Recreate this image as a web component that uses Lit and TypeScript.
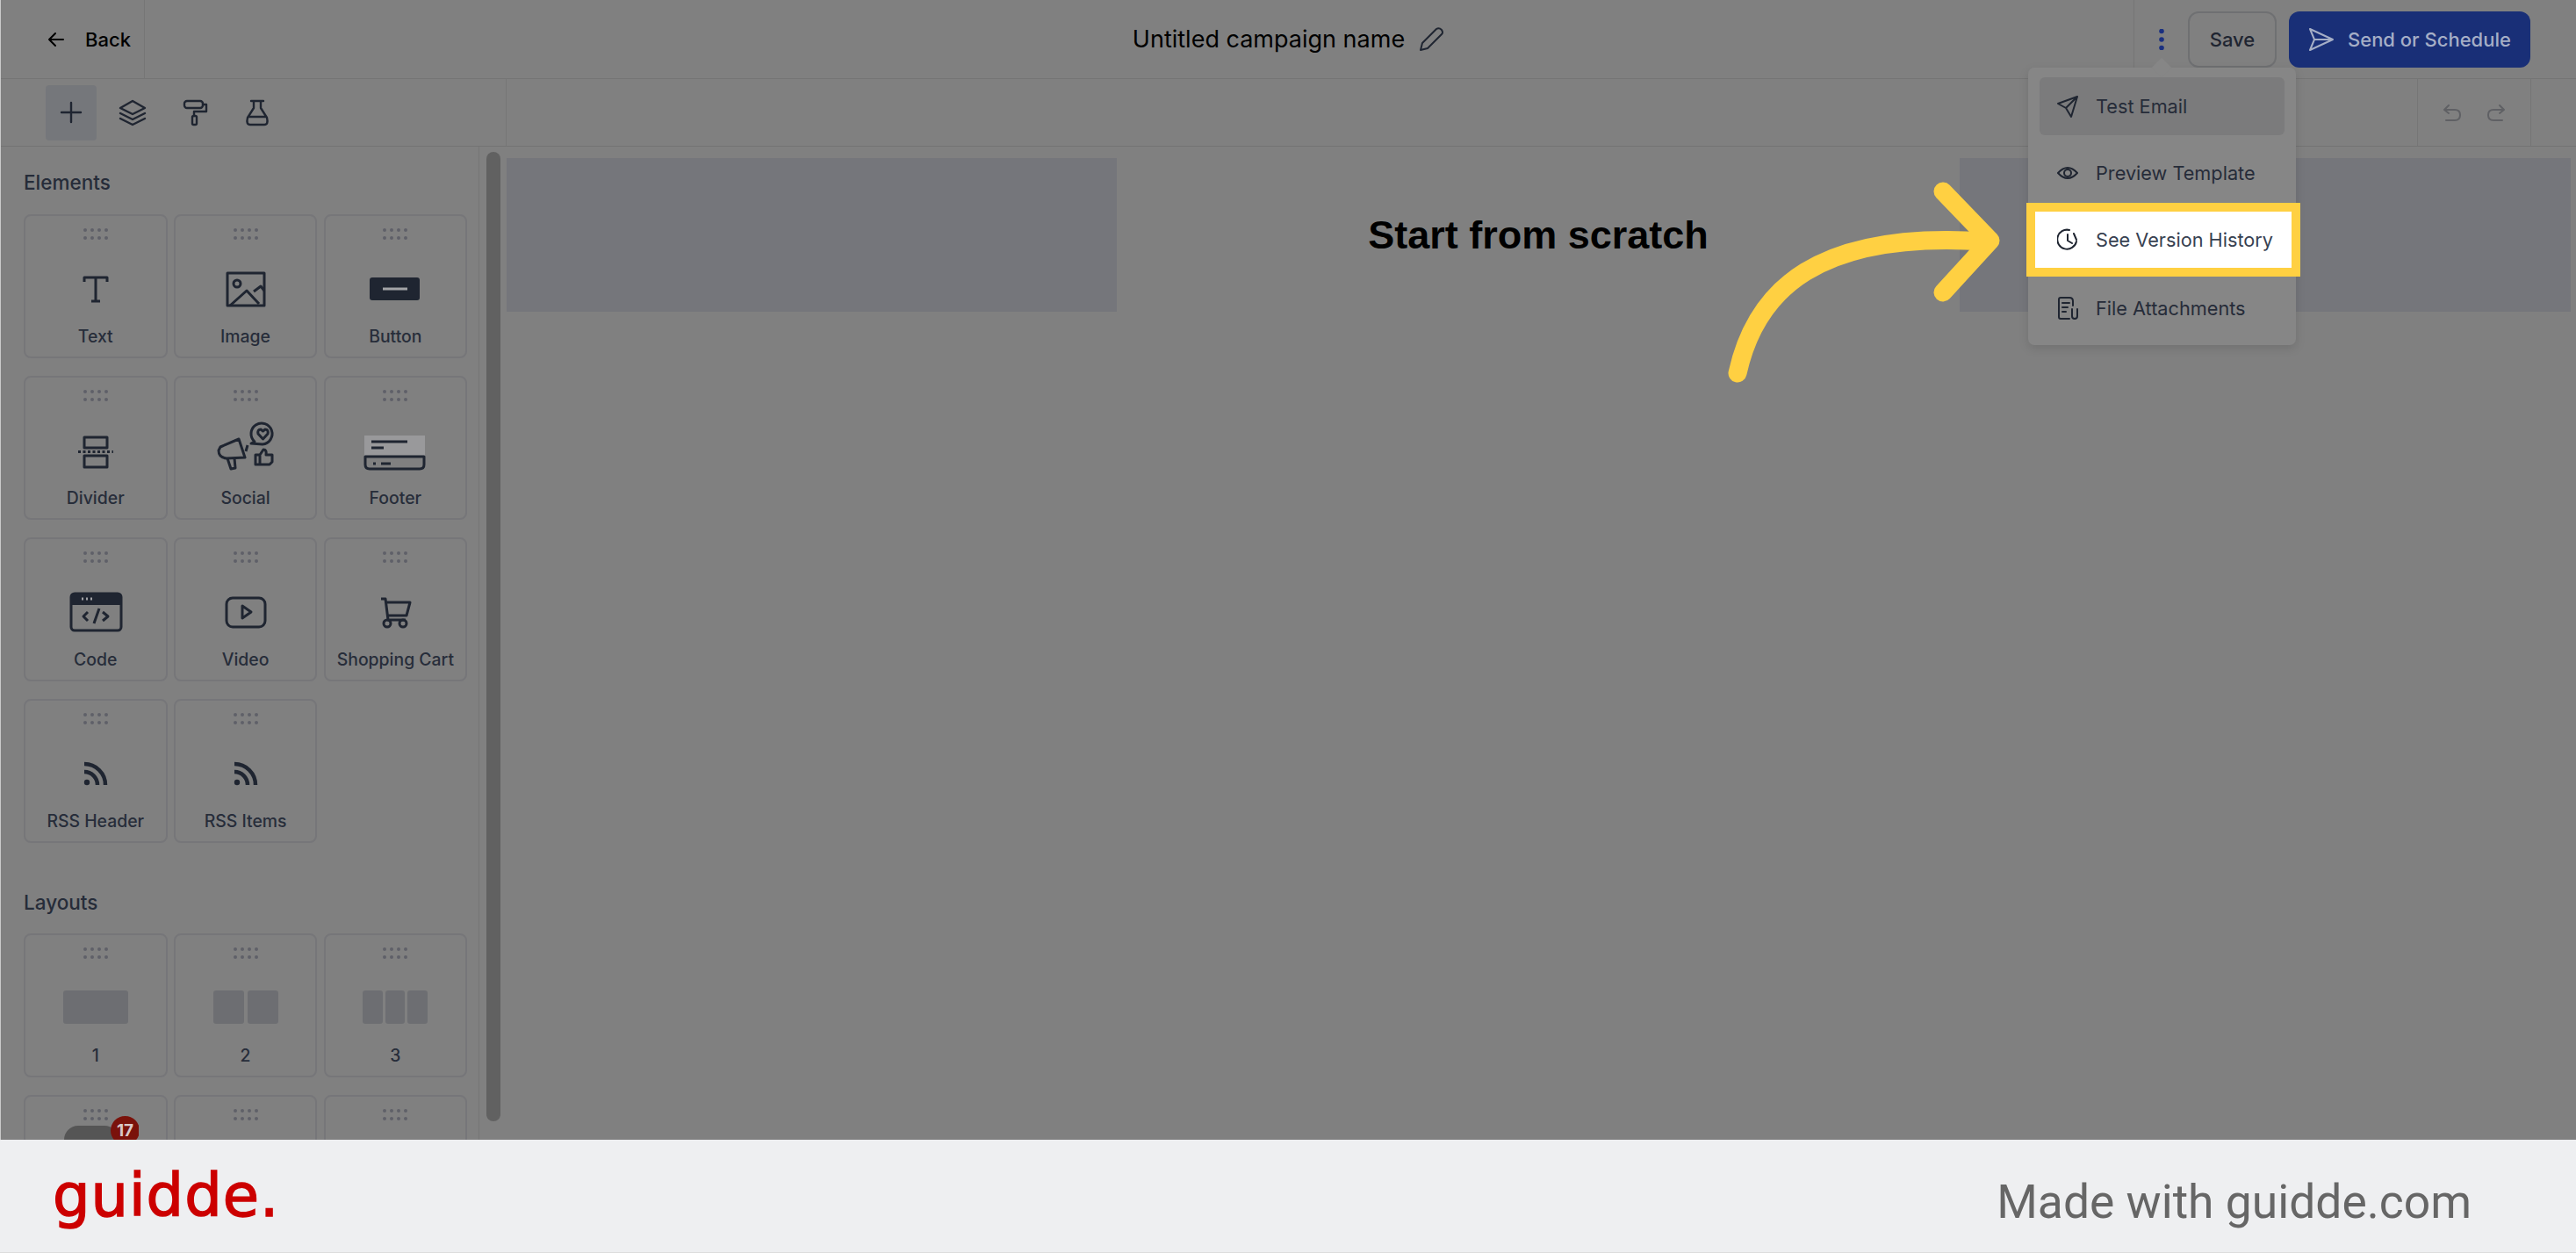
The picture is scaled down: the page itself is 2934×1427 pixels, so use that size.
import { LitElement, html, css, svg } from "lit";
import { customElement } from "lit/decorators.js";

const I = (body: unknown) => html`<svg class="ico" viewBox="-40 -32 80 64">${body}</svg>`;

const elements: [string, unknown][] = [
  ["Text", I(svg`<path d="M-13 -8V-13H13V-8M0 -13V14M-5 14H5"/>`)],
  ["Image", I(svg`<rect x="-21" y="-18" width="42" height="37"/><circle cx="-10" cy="-6" r="4"/><path d="M-18 19L1 2L15 17M9 3L17 -3L21 2"/>`)],
  ["Button", I(svg`<rect x="-29" y="-13" width="57" height="26" rx="3" class="f"/><path d="M-14 0H14" class="lite"/>`)],
  ["Divider", I(svg`<rect x="-13" y="-15" width="26" height="12"/><rect x="-13" y="6" width="26" height="13"/><path d="M-20 1.5H20" stroke-dasharray="3 2.5"/>`)],
  ["Social", I(svg`<path d="M-29 -4L-8 -13L-1 8L-22 9Q-31 8 -31 0Z"/><path d="M-21 9L-17 21L-12 20L-13 9M2 -6L0 1"/><path d="M6 -8L10 -10A12 12 0 1 1 19 -7Z"/><path d="M19.5 -13L14 -19Q13 -24 17 -24L19.5 -22L22 -24Q26 -24 25 -19Z"/><path d="M11 5H16V16H11ZM16 5L20 -1Q24 -1 23 5H30V13L27 16H16"/>`)],
  ["Footer", I(svg`<rect x="-35" y="-17" width="69" height="24" class="panel"/><path d="M-27 -10H14M-27 -3H-13"/><path d="M-34 7H33V16Q33 21 28 21H-29Q-34 21 -34 16Z"/><path d="M-25 15H-22M-16 15H-5"/>`)],
  ["Code", I(svg`<rect x="-28" y="-21" width="57" height="42" rx="4"/><path d="M-28 -15Q-28 -21 -24 -21H25Q29 -21 29 -15V-8H-28Z" class="f"/><path d="M-16 -15H-14M-11 -15H-9M-6 -15H-4" class="lite"/><path d="M-9 0L-14 5L-9 10M8 0L14 5L8 10M4 -4L-2 13"/>`)],
  ["Video", I(svg`<rect x="-22" y="-16" width="44" height="33" rx="7"/><path d="M-4 -7L6 0L-4 7Z"/>`)],
  ["Shopping Cart", I(svg`<path d="M-16 -15H-11L-8 9H12M-10 -11H17L13 4H-8"/><circle cx="-9" cy="13" r="4"/><circle cx="9" cy="13" r="4"/>`)],
  ["RSS Header", I(svg`<path class="thick" d="M-13 -11A24 24 0 0 1 11 13M-13 -2A15 15 0 0 1 2 13"/><circle class="f" cx="-10" cy="10" r="3.2"/>`)],
  ["RSS Items", I(svg`<path class="thick" d="M-13 -11A24 24 0 0 1 11 13M-13 -2A15 15 0 0 1 2 13"/><circle class="f" cx="-10" cy="10" r="3.2"/>`)],
];

@customElement("app-root")
export class AppRoot extends LitElement {
  static styles = css`
    :host { display: block; width: 2934px; height: 1427px; font-family: Inter, "Liberation Sans", sans-serif; color: #1f2531; overflow: hidden; }
    .page { position: relative; height: 100%; display: flex; flex-direction: column; }
    .main { flex: 1; min-height: 0; display: flex; flex-direction: column; background: #808080; border-left: 1px solid #c9c9c9; overflow: hidden; }
    .head { height: 89px; flex: none; display: flex; align-items: center; border-bottom: 1px solid #757575; box-sizing: content-box; }
    .back { width: 164px; height: 100%; flex: none; box-sizing: border-box; border-right: 1px solid #767676; display: flex; align-items: center; padding-left: 54px; gap: 24px; font-size: 22px; font-weight: 500; color: #000; }
    .title { flex: 1; display: flex; align-items: center; justify-content: center; gap: 16px; font-size: 27px; color: #000; padding-left: 340px; }
    .actions { width: 504px; height: 100%; flex: none; box-sizing: border-box; border-left: 1px solid #767676; display: flex; align-items: center; padding-left: 20px; }
    .kebab { width: 22px; height: 24px; margin-right: 19px; }
    .save { width: 101px; height: 64px; box-sizing: border-box; border: 2px solid #6f7072; border-radius: 12px; display: flex; align-items: center; justify-content: center; font-size: 22px; font-weight: 500; color: #1f2531; }
    .send { margin-left: 14px; width: 275px; height: 64px; border-radius: 12px; background: #192f77; display: flex; align-items: center; gap: 16px; padding-left: 23px; box-sizing: border-box; font-size: 22px; font-weight: 500; color: #a5aec6; }
    .tools { height: 76px; flex: none; display: flex; border-bottom: 1px solid #737373; }
    .tabs { width: 576px; flex: none; box-sizing: border-box; border-right: 1px solid #767676; display: flex; align-items: center; padding-left: 51px; }
    .tab { height: 63px; width: 58px; display: flex; align-items: center; justify-content: center; border-radius: 4px; margin-right: 13px; }
    .tab.on { background: #75777b; margin-right: 12px; }
    .tool-sp { flex: 1; }
    .undo { width: 130px; flex: none; box-sizing: border-box; margin-right: 51px; border-left: 1px solid #767676; border-right: 1px solid #767676; display: flex; align-items: center; justify-content: center; gap: 30px; }
    .body { flex: 1; min-height: 0; display: flex; }
    .side { width: 545px; flex: none; box-sizing: border-box; padding: 26px 0 0 26px; border-right: 1px solid #767676; overflow: hidden; }
    .h { font-size: 22.5px; line-height: 30px; font-weight: 500; color: #262c39; margin-bottom: 21px; }
    .h.l2 { margin-top: 53.5px; margin-bottom: 20px; }
    .grid { display: grid; grid-template-columns: repeat(3, 163.5px); gap: 20.5px 7.3px; }
    .card { height: 163.5px; box-sizing: border-box; border: 2px solid #767679; border-radius: 8px; display: flex; flex-direction: column; align-items: center; position: relative; }
    .dots { margin-top: 14px; width: 28px; display: grid; grid-template-columns: repeat(4, 4px); justify-content: space-between; row-gap: 5px; }
    .dots i { width: 4px; height: 4px; border-radius: 50%; background: #5f6068; }
    .icon { height: 64px; margin-top: 23.5px; display: flex; align-items: center; justify-content: center; }
    .ico { width: 80px; height: 64px; overflow: visible; fill: none; stroke: #1f2531; stroke-width: 3; stroke-linejoin: round; }
    .ico .f { fill: #1f2531; stroke: none; }
    .ico .lite { stroke: #a3a4a7; stroke-width: 3; }
    .ico .thick { stroke-width: 4.5; }
    .ico .panel { fill: #99999b; stroke: none; }
    .lbl { font-size: 19.4px; line-height: 30px; margin-top: 7.5px; font-weight: 500; color: #272d3a; white-space: nowrap; }
    .lay { height: 78px; margin-top: 15.5px; display: flex; align-items: center; }
    .lay i { display: block; height: 38px; background: #6d6e72; border-radius: 3px; }
    .lbl.n { margin-top: 1.5px; }
    .track { width: 31px; flex: none; box-sizing: border-box; padding: 6px 7px 0 8px; }
    .thumb { height: 1104px; border-radius: 8px; background: #616161; }
    .canvas { flex: 1; padding-top: 13px; }
    .stripes { height: 175px; display: flex; align-items: center; margin-right: 6px; }
    .stripes b { display: block; height: 100%; background: #75767b; }
    .st1 { width: 695px; } .st2 { width: 696px; }
    .cap { flex: 1; text-align: center; font: bold 45px "Liberation Sans", Arial, sans-serif; color: #000; }
    .bottom { height: 129px; flex: none; background: #eeeff1; display: flex; align-items: center; justify-content: space-between; padding: 0 119px 0 60px; border-bottom: 1px solid #dcdcdc; box-sizing: border-box; }
    .logo { font: 400 67px "DejaVu Sans", sans-serif; color: #cc0000; letter-spacing: 1px; line-height: 1; -webkit-text-stroke: 1.5px #cc0000; }
    .made { font: 400 53.4px Roboto, sans-serif; color: #666; padding-top: 12px; }
    .chat { position: absolute; left: 73px; top: 1282px; width: 62px; height: 16px; border-radius: 20px 20px 0 0; background: #555; }
    .badge { position: absolute; left: 126px; top: 1271px; width: 32px; height: 27px; overflow: hidden; }
    .badge span { display: block; width: 33px; height: 33px; border-radius: 50%; background: #7a120b; color: #d9c9c8; font-size: 19px; font-weight: 700; line-height: 33px; text-align: center; }
    .menu { position: absolute; left: 2310px; top: 77px; width: 305px; height: 316px; background: #868686; border-radius: 7px; box-shadow: 0 4px 12px rgba(0,0,0,.12); box-sizing: border-box; padding: 10.5px 13px 0; display: flex; flex-direction: column; }
    .menu:before { content: ""; position: absolute; left: 144px; top: -8px; width: 16px; height: 16px; background: #868686; transform: rotate(45deg); }
    .mi { height: 66px; margin-bottom: 10.7px; flex: none; display: flex; align-items: center; gap: 20px; padding-left: 20px; border-radius: 6px; font-size: 21.7px; font-weight: 400; color: #262c39; position: relative; white-space: nowrap; }
    .mi.first { background: #7b7b7c; }
    .mi.hi { background: #fff; color: #374151; margin: 0.5px -8px 12.2px -5px; padding-left: 25px; height: 64px; border-radius: 0; outline: 10px solid #ffd042; z-index: 1; }
    .mi svg { width: 24px; height: 26px; flex: none; fill: none; stroke: #1f2531; stroke-width: 2; stroke-linejoin: round; stroke-linecap: round; }
    .arrow { position: absolute; left: 0; top: 0; width: 2934px; height: 1427px; pointer-events: none; fill: none; stroke: #ffd042; stroke-width: 21; stroke-linecap: round; stroke-linejoin: round; }
    svg.s { display: block; fill: none; stroke: #1f2531; stroke-width: 3; stroke-linecap: round; stroke-linejoin: round; overflow: visible; }
  `;

  private dots() { return html`<div class="dots">${Array.from({ length: 8 }, () => html`<i></i>`)}</div>`; }

  private card(label: string, icon: unknown) {
    return html`<div class="card">${this.dots()}<div class="icon">${icon}</div><div class="lbl">${label}</div></div>`;
  }

  private layCard(n: number, widths: number[]) {
    return html`<div class="card">${this.dots()}
      <div class="lay" style="gap:${n === 3 ? 3 : 4}px">${widths.map((w) => html`<i style="width:${w}px"></i>`)}</div>
      ${n ? html`<div class="lbl n">${n}</div>` : ""}</div>`;
  }

  render() {
    return html`<div class="page">
      <div class="main">
        <div class="head">
          <div class="back">
            <svg class="s" width="18" height="16" viewBox="0 0 18 16" style="stroke:#000;stroke-width:2"><path d="M17 8H1M8 1L1 8L8 15"/></svg>
            <span>Back</span>
          </div>
          <div class="title"><span>Untitled campaign name</span>
            <svg class="s" width="29" height="29" viewBox="0 0 29 29" style="stroke-width:2"><path d="M2 27L4 19L20 3Q23 1 26 4Q28 7 26 9L10 25Z"/></svg>
          </div>
          <div class="actions">
            <svg class="kebab" viewBox="0 0 22 24" style="fill:#1a3080"><circle cx="11" cy="2.5" r="2.8"/><circle cx="11" cy="12" r="2.8"/><circle cx="11" cy="21.5" r="2.8"/></svg>
            <div class="save">Save</div>
            <div class="send">
              <svg class="s" width="28" height="26" viewBox="0 0 28 26" style="stroke:#a5aec6;stroke-width:2"><path d="M1 1L27 13L1 25L6 13ZM6 13H27"/></svg>
              <span>Send or Schedule</span>
            </div>
          </div>
        </div>
        <div class="tools">
          <div class="tabs">
            <div class="tab on"><svg class="s" width="22" height="22" viewBox="0 0 22 22" style="stroke-width:2.4"><path d="M11 0V22M0 11H22"/></svg></div>
            <div class="tab"><svg class="s" width="30" height="29" viewBox="0 0 30 29" style="stroke-width:2.4"><path d="M15 1L29 9L15 16L1 9ZM1 15L15 22L29 15M1 21L15 28L29 21"/></svg></div>
            <div class="tab"><svg class="s" width="27" height="29" viewBox="0 0 27 29" style="stroke-width:2.4"><rect x="1" y="1" width="21" height="8" rx="3"/><path d="M22 5H26V13H12V18"/><rect x="10" y="18" width="5" height="10" rx="1.5"/></svg></div>
            <div class="tab"><svg class="s" width="26" height="29" viewBox="0 0 26 29" style="stroke-width:2.4"><path d="M6 1H20M9 1V9L2 20Q0 28 5 28H21Q26 28 24 20L17 9V1M4 19H22"/></svg></div>
          </div>
          <div class="tool-sp"></div>
          <div class="undo">
            <svg class="s" width="20" height="19" viewBox="0 0 20 19" style="stroke:#5f6064;stroke-width:2"><path d="M6 1L1 6L6 10M1 6H13Q19 6 19 12Q19 18 13 18H3"/></svg>
            <svg class="s" width="20" height="19" viewBox="0 0 20 19" style="stroke:#5f6064;stroke-width:2"><path d="M14 1L19 6L14 10M19 6H7Q1 6 1 12Q1 18 7 18H17"/></svg>
          </div>
        </div>
        <div class="body">
          <div class="side">
            <div class="h">Elements</div>
            <div class="grid">${elements.map(([l, i]) => this.card(l, i))}</div>
            <div class="h l2">Layouts</div>
            <div class="grid">
              ${this.layCard(1, [74])}
              ${this.layCard(2, [35, 35])}
              ${this.layCard(3, [23, 22, 23])}
              ${this.layCard(0, [])}${this.layCard(0, [])}${this.layCard(0, [])}
            </div>
          </div>
          <div class="track"><div class="thumb"></div></div>
          <div class="canvas">
            <div class="stripes"><b class="st1"></b><div class="cap">Start from scratch</div><b class="st2"></b></div>
          </div>
        </div>
      </div>
      <div class="bottom">
        <div class="logo">guidde.</div>
        <div class="made">Made with guidde.com</div>
      </div>

      <div class="chat"></div>
      <div class="badge"><span>17</span></div>

      <div class="menu">
        <div class="mi first"><svg viewBox="0 0 24 26"><path d="M23 2L1 10L10 15L16 25ZM10 15L23 2"/></svg><span>Test Email</span></div>
        <div class="mi"><svg viewBox="0 0 24 26"><path d="M1 13Q12 1 23 13Q12 25 1 13Z"/><circle cx="12" cy="13" r="4"/></svg><span>Preview Template</span></div>
        <div class="mi hi"><svg viewBox="0 0 24 26"><path d="M14 2A11 11 0 1 0 22 15M12 7V14L17 17M19 6L22 13"/></svg><span>See Version History</span></div>
        <div class="mi"><svg viewBox="0 0 24 26"><path d="M14 25H4Q2 25 2 23V3Q2 1 4 1H14Q18 1 18 5V10M6 7H14M6 12H12M6 17H10"/><path d="M17 14V22Q17 25 20 25Q23 25 23 22V14"/></svg><span>File Attachments</span></div>
      </div>

      <svg class="arrow" viewBox="0 0 2934 1427">
        <path d="M1979 425C2000 330 2070 262 2262 275"/>
        <path d="M2213 218L2267 274L2213 333"/>
      </svg>
    </div>`;
  }
}
